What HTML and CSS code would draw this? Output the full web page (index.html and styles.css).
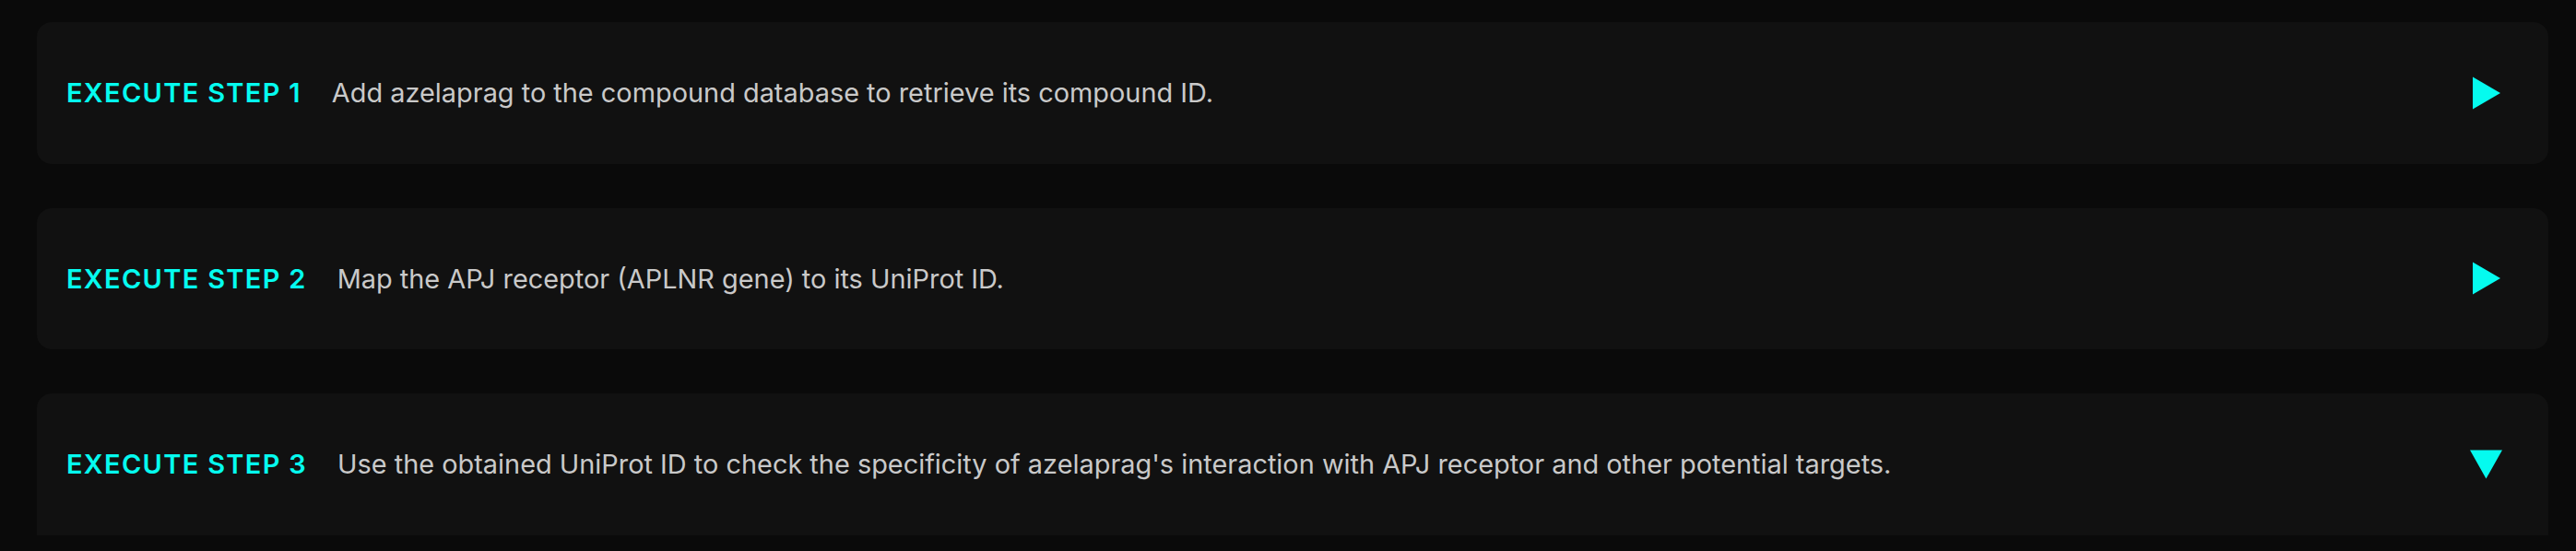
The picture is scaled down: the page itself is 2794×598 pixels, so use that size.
FILE: index.html
```html
<!DOCTYPE html>
<html lang="en">
<head>
<meta charset="utf-8">
<title>Execute steps</title>
<link rel="stylesheet" href="styles.css">
</head>
<body>
<main class="steps">
  <section class="step">
    <div class="step-text">
      <span class="step-label">EXECUTE STEP 1</span>
      <span class="step-desc">Add azelaprag to the compound database to retrieve its compound ID.</span>
    </div>
    <svg class="step-icon" viewBox="0 0 36 36" aria-hidden="true"><polygon points="3,0.5 33,18 3,35.5"/></svg>
  </section>
  <section class="step">
    <div class="step-text">
      <span class="step-label">EXECUTE STEP 2</span>
      <span class="step-desc">Map the APJ receptor (APLNR gene) to its UniProt ID.</span>
    </div>
    <svg class="step-icon" viewBox="0 0 36 36" aria-hidden="true"><polygon points="3,0.5 33,18 3,35.5"/></svg>
  </section>
  <section class="step step-open">
    <div class="step-text">
      <span class="step-label">EXECUTE STEP 3</span>
      <span class="step-desc">Use the obtained UniProt ID to check the specificity of azelaprag's interaction with APJ receptor and other potential targets.</span>
    </div>
    <svg class="step-icon" viewBox="0 0 36 36" aria-hidden="true"><polygon points="0,2.5 35,2.5 17.5,33.5"/></svg>
  </section>
</main>
</body>
</html>
```
FILE: styles.css
```css
html, body {
  margin: 0;
  padding: 0;
  background: #0a0a0a;
}

body {
  font-family: Inter, "Noto Sans", sans-serif;
  height: 598px;
  overflow: hidden;
}

.steps {
  display: flex;
  flex-direction: column;
  gap: 48px;
  padding: 24px 30px 0 40px;
}

.step {
  display: flex;
  align-items: center;
  justify-content: space-between;
  height: 153.5px;
  box-sizing: border-box;
  padding: 0 49px 0 32px;
  background: #111111;
  border-radius: 16px;
}

.step-open {
  border-radius: 16px 16px 0 0;
}

.step-text {
  display: flex;
  align-items: center;
  gap: 33px;
}

.step-label {
  color: #05fbef;
  font-size: 29px;
  font-weight: 600;
  letter-spacing: 0.045em;
  white-space: nowrap;
}

.step-desc {
  color: #c9c9c9;
  font-size: 28.9px;
  font-weight: 400;
}

.step-icon {
  width: 36px;
  height: 36px;
  flex: none;
  fill: #05fbef;
}
```
